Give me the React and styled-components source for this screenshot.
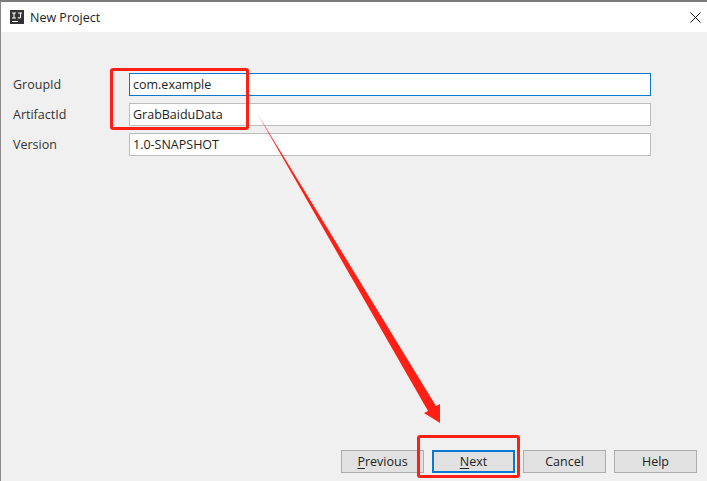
import React from 'react';
import styled, { createGlobalStyle } from 'styled-components';

const Global = createGlobalStyle`
  html, body { margin: 0; padding: 0; }
  body { font-family: "Open Sans", "Noto Sans", "Liberation Sans", sans-serif; }
`;

const Dialog = styled.div`
  position: relative;
  width: 707px;
  height: 481px;
  overflow: hidden;
  background: #f0f0f0;
  display: flex;
  flex-direction: column;
  border-top: 2px solid #7a7a7a;
  border-left: 1px solid #8a8a8a;
  box-sizing: border-box;
`;

const TitleBar = styled.div`
  height: 30px;
  background: #fff;
  display: flex;
  align-items: center;
  padding-left: 9px;
  gap: 6px;
  font-size: 12.5px;
  color: #222;
`;

const CloseBtn = styled.svg`
  margin-left: auto;
  margin-right: 6px;
  width: 11px;
  height: 11px;
`;

const Form = styled.div`
  flex: 1;
  padding: 41px 56px 0 12px;
  display: flex;
  flex-direction: column;
  gap: 7px;
`;

const Row = styled.div`
  display: flex;
  align-items: center;
  height: 23px;
`;

const Label = styled.div`
  width: 116px;
  font-size: 12.5px;
  color: #333;
`;

const Field = styled.div`
  flex: 1;
  height: 23px;
  box-sizing: border-box;
  background: #fff;
  border: 1px solid ${p => (p.$focus ? '#0a78d0' : '#bdbdbd')};
  padding-left: 3px;
  font-size: 12.5px;
  line-height: 21px;
  color: #222;
`;

const Footer = styled.div`
  display: flex;
  justify-content: flex-end;
  gap: 8px;
  padding: 0 10px 8px 0;
`;

const Button = styled.div`
  width: 83px;
  height: 23px;
  box-sizing: border-box;
  background: #e1e1e1;
  border: ${p => (p.$primary ? '2px solid #0a78d0' : '1px solid #adadad')};
  font-size: 12.5px;
  color: #222;
  display: flex;
  align-items: center;
  justify-content: center;
  u { text-underline-offset: 2px; }
`;

const Box = styled.div`
  position: absolute;
  box-sizing: border-box;
  border: 3px solid #fe2015;
  border-radius: 3px;
  left: ${p => p.$x}px;
  top: ${p => p.$y}px;
  width: ${p => p.$w}px;
  height: ${p => p.$h}px;
`;

const Overlay = styled.svg`
  position: absolute;
  left: -1px;
  top: -2px;
  width: 707px;
  height: 481px;
  pointer-events: none;
`;

export default function App() {
  return (
    <Dialog>
      <Global />
      <TitleBar>
        <svg width="14" height="14" viewBox="0 0 14 14">
          <rect width="14" height="14" fill="#333" />
          <rect x="2" y="11" width="6" height="1" fill="#fff" />
          <path d="M2 3h4M4 3v5M2 8h4M8 3h4M10.500 3v4c0 1.200-1.500 1.200-2.500.5" stroke="#fff" strokeWidth="1.100" fill="none" />
        </svg>
        New Project
        <CloseBtn viewBox="0 0 11 11">
          <path d="M.5.5l10 10M10.500.5l-10 10" stroke="#111" strokeWidth="1" fill="none" />
        </CloseBtn>
      </TitleBar>
      <Form>
        <Row><Label>GroupId</Label><Field $focus>com.example</Field></Row>
        <Row><Label>ArtifactId</Label><Field>GrabBaiduData</Field></Row>
        <Row><Label>Version</Label><Field>1.0-SNAPSHOT</Field></Row>
      </Form>
      <Footer>
        <Button><span><u>P</u>revious</span></Button>
        <Button $primary><span><u>N</u>ext</span></Button>
        <Button>Cancel</Button>
        <Button>Help</Button>
      </Footer>
      <Box $x={109} $y={66} $w={139} $h={62} />
      <Box $x={416} $y={433} $w={103} $h={43} />
      <Overlay viewBox="0 0 707 481">
        <path d="M257 113L428 411L424 413L440 423L440 404L436 406Z" fill="#fe2015" />
      </Overlay>
    </Dialog>
  );
}
